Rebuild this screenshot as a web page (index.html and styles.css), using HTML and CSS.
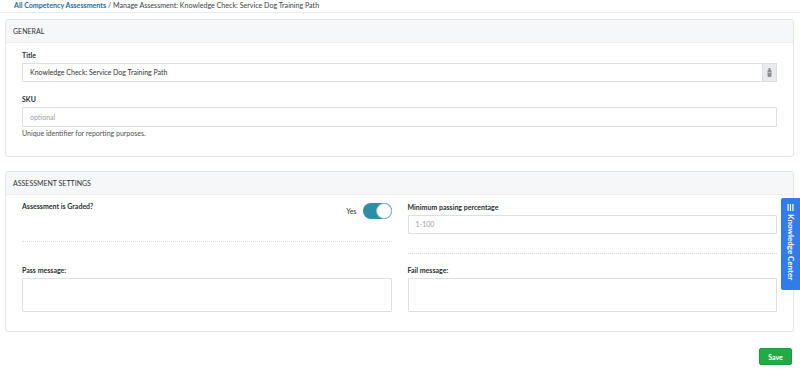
FILE: index.html
```html
<!DOCTYPE html>
<html>
<head>
<meta charset="utf-8">
<link rel="stylesheet" href="styles.css">
</head>
<body>
<div class="breadcrumb"><a class="crumb-link">All Competency Assessments</a> / Manage Assessment: Knowledge Check: Service Dog Training Path</div>
<div class="page">
  <div class="card">
    <div class="card-header">GENERAL</div>
    <div class="card-body general">
      <div class="field">
        <label class="label">Title</label>
        <div class="input-group">
          <div class="input grow">Knowledge Check: Service Dog Training Path</div>
          <div class="addon">
            <svg width="5" height="9" viewBox="0 0 5 9"><rect x="1.5" y="0" width="2" height="2" fill="#8a8f96"/><rect x="0.5" y="2" width="4" height="7" rx="1" fill="#8a8f96"/><rect x="1.3" y="4" width="2.4" height="1" fill="#c4c8cc"/></svg>
          </div>
        </div>
      </div>
      <div class="field sku">
        <label class="label">SKU</label>
        <div class="input placeholder">optional</div>
        <div class="help">Unique identifier for reporting purposes.</div>
      </div>
    </div>
  </div>

  <div class="card">
    <div class="card-header">ASSESSMENT SETTINGS</div>
    <div class="card-body settings">
      <div class="cell graded">
        <div class="label">Assessment is Graded?</div>
        <div class="toggle-wrap">
          <span class="toggle-text">Yes</span>
          <span class="toggle"><span class="knob"></span></span>
        </div>
      </div>
      <div class="cell minpass">
        <div class="label">Minimum passing percentage</div>
        <div class="input placeholder">1-100</div>
      </div>
      <div class="cell msg">
        <div class="label">Pass message:</div>
        <div class="textarea"></div>
      </div>
      <div class="cell msg">
        <div class="label">Fail message:</div>
        <div class="textarea"></div>
      </div>
    </div>
  </div>

  <div class="actions"><button class="save">Save</button></div>
</div>

<div class="kc-tab">
  <svg width="7" height="7" viewBox="0 0 7 7"><rect x="0.5" y="0" width="1.2" height="7" fill="#fff"/><rect x="2.9" y="0" width="1.2" height="7" fill="#fff"/><rect x="5.3" y="0" width="1.2" height="7" fill="#fff"/></svg>
  <span class="kc-text">Knowledge Center</span>
</div>
</body>
</html>
```

FILE: styles.css
```css
* { box-sizing: border-box; }
html, body { margin: 0; padding: 0; background: #fff; }
body {
  font-family: Lato, "Open Sans", sans-serif;
  color: #333;
  font-size: 7.5px;
}
.breadcrumb {
  height: 13px;
  line-height: 12px;
  padding: 0 14px;
  border-bottom: 1px solid #e6e9ed;
  color: #3d4349;
  font-size: 7.1px;
}
.crumb-link { color: #1d6fa5; font-weight: 700; }
.page { padding: 6px 6px 0 5px; }
.card {
  border: 1px solid #e2e5e9;
  border-radius: 3px;
  margin-bottom: 14px;
  background: #fff;
}
.card-header {
  height: 23px;
  line-height: 22px;
  padding: 0 7px;
  background: #f6f7f9;
  border-bottom: 1px solid #eceef1;
  font-size: 7px;
  color: #333;
  border-radius: 3px 3px 0 0;
}
.card-body { padding: 7px 16px 0 16px; }
.general { padding-bottom: 18px; }
.label {
  display: block;
  font-weight: 700;
  font-size: 7px;
  line-height: 11px;
  color: #2b2f33;
  margin-bottom: 2px;
}
.input-group { display: flex; height: 19px; }
.input {
  height: 19px;
  border: 1px solid #dcdfe3;
  border-radius: 1px;
  padding: 0 7px;
  line-height: 17px;
  font-size: 7px;
  color: #333;
}
.input.grow { flex: 1; border-right: none; }
.placeholder { color: #9a9ea3; }
.addon {
  width: 15px;
  background: #e9ebee;
  border: 1px solid #dcdfe3;
  display: flex;
  align-items: center;
  justify-content: center;
}
.sku { margin-top: 12px; }
.sku .input { height: 20px; line-height: 18px; }
.help { font-size: 7px; line-height: 10px; margin-top: 1px; color: #4a4f55; }

.settings {
  display: grid;
  grid-template-columns: 1fr 1fr;
  column-gap: 16px;
  padding-top: 6px;
  padding-bottom: 19px;
}
.cell { align-self: start; }
.graded {
  display: flex;
  justify-content: space-between;
  align-items: flex-start;
  height: 41px;
  border-bottom: 1px dotted #d6d9dd;
}
.toggle-wrap { display: flex; align-items: center; gap: 6px; margin-top: 2px; }
.toggle-text { font-size: 7px; color: #333; }
.toggle {
  width: 29px;
  height: 16px;
  border-radius: 8px;
  background: #2a8ea9;
  position: relative;
  display: block;
}
.knob {
  position: absolute;
  right: 0;
  top: 0;
  width: 16px;
  height: 16px;
  border-radius: 50%;
  background: #fff;
  border: 1px solid #8fb9c7;
}
.minpass {
  padding-top: 1px;
  padding-bottom: 19px;
  border-bottom: 1px dotted #d6d9dd;
}
.msg { margin-top: 11px; }
.textarea {
  height: 34px;
  border: 1px solid #dcdfe3;
  border-radius: 1px;
}
.actions { display: flex; justify-content: flex-end; padding-right: 2px; margin-top: 16px; }
.save {
  width: 33px;
  height: 17px;
  background: #22aa46;
  border: 1px solid #1c9a3c;
  border-radius: 2px;
  color: #fff;
  font-family: Lato, sans-serif;
  font-weight: 700;
  font-size: 7px;
  padding: 0;
}
.kc-tab {
  position: fixed;
  right: 0;
  top: 198px;
  width: 19px;
  height: 92px;
  background: #307ce8;
  border-radius: 2px 0 0 2px;
  display: flex;
  flex-direction: column;
  align-items: center;
  padding-top: 6px;
  gap: 3px;
}
.kc-text {
  writing-mode: vertical-rl;
  color: #fff;
  font-weight: 700;
  font-size: 8px;
  line-height: 10px;
}
```
